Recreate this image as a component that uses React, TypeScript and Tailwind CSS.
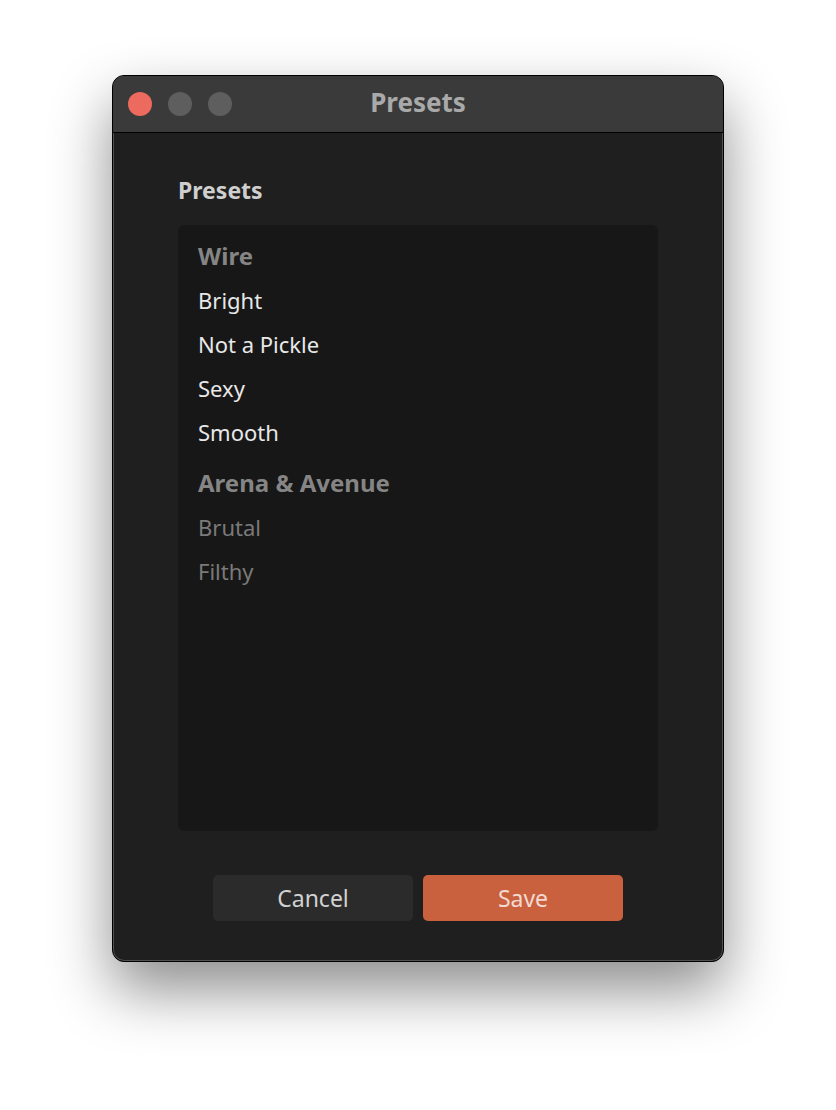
import React from "react";

const groups = [
  { name: "Wire", items: ["Bright", "Not a Pickle", "Sexy", "Smooth"], enabled: true },
  { name: "Arena & Avenue", items: ["Brutal", "Filthy"], enabled: false },
];

export default function App() {
  return (
    <div
      className="w-[836px] h-[1110px] bg-white pt-[75px] pl-[112px]"
      style={{ fontFamily: '"Noto Sans", "Open Sans", sans-serif' }}
    >
      <div className="w-[612px] h-[887px] rounded-[12px] bg-[#1f1f1f] border border-black overflow-hidden flex flex-col shadow-[inset_0_0_0_1px_rgba(255,255,255,0.22),0_28px_60px_rgba(0,0,0,0.45)]">
        <div className="h-[57px] shrink-0 bg-[#3a3a3a] border-b border-black flex items-center relative px-[15px]">
          <div className="flex gap-[16px]">
            <div className="w-[24px] h-[24px] rounded-full bg-[#ec6a5e]" />
            <div className="w-[24px] h-[24px] rounded-full bg-[#5e5e5e]" />
            <div className="w-[24px] h-[24px] rounded-full bg-[#5e5e5e]" />
          </div>
          <div className="absolute inset-0 flex items-center justify-center text-[26px] leading-none pb-[4px] font-bold text-[#a9a9a9] pointer-events-none">
            Presets
          </div>
        </div>
        <div className="flex-1 flex flex-col px-[65px] pt-[43px]">
          <div className="text-[23px] font-bold text-[#cfcfcf] leading-[28px] h-[28px]">Presets</div>
          <div className="mt-[21px] h-[606px] rounded-[6px] bg-[#171717] pt-[9px] px-[20px]">
            {groups.map((g, gi) => (
              <div key={g.name} className={gi > 0 ? "mt-[7px]" : ""}>
                <div className="h-[44px] flex items-center text-[24px] font-bold text-[#858585]">{g.name}</div>
                {g.items.map((it) => (
                  <div
                    key={it}
                    className={
                      "h-[44px] flex items-center text-[22px] " +
                      (g.enabled ? "text-[#e8e8e8]" : "text-[#7a7a7a]")
                    }
                  >
                    {it}
                  </div>
                ))}
              </div>
            ))}
          </div>
          <div className="mt-[44px] flex justify-center gap-[10px]">
            <button className="w-[200px] h-[46px] rounded-[5px] bg-[#2b2b2b] text-[23px] text-[#d2d2d2]">
              Cancel
            </button>
            <button className="w-[200px] h-[46px] rounded-[5px] bg-[#c9613f] text-[23px] text-[#f3d9d0]">
              Save
            </button>
          </div>
        </div>
      </div>
    </div>
  );
}
